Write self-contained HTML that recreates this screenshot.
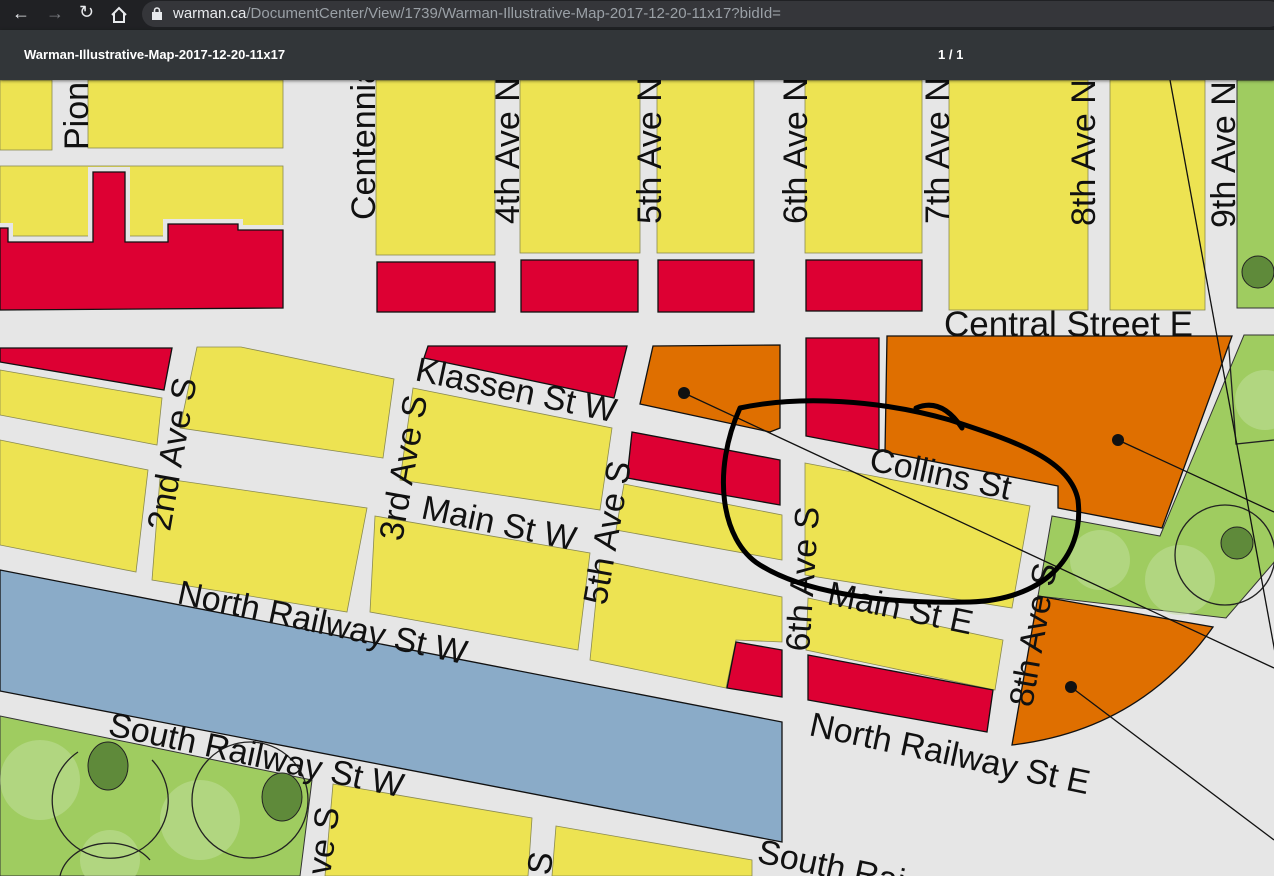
<!DOCTYPE html>
<html><head><meta charset="utf-8"><style>
html,body{margin:0;padding:0;width:1274px;height:876px;overflow:hidden;background:#e6e6e6;font-family:"Liberation Sans",sans-serif}
#top{position:absolute;left:0;top:0;width:1274px;height:30px;background:#202124}
#url{position:absolute;left:142px;top:1px;width:1140px;height:26px;border-radius:14px;background:#35363a}
#bar{position:absolute;left:0;top:30px;width:1274px;height:50px;background:#323639;box-shadow:0 1px 3px rgba(0,0,0,.5)}
svg{position:absolute;left:0;top:0}
</style></head><body>
<svg width="1274" height="876" viewBox="0 0 1274 876" font-family="Liberation Sans, sans-serif">
<rect x="0" y="80" width="1274" height="796" fill="#e6e6e6"/>
<g stroke="#8a8a50" stroke-width="0.8" fill="#ede352">
<rect x="0" y="80" width="52" height="70"/>
<rect x="88" y="80" width="195" height="68"/>
<rect x="0" y="166" width="283" height="70"/>
<rect x="376" y="80" width="119" height="175"/>
<rect x="520" y="80" width="120" height="173"/>
<rect x="657" y="80" width="97" height="173"/>
<rect x="805" y="80" width="117" height="173"/>
<rect x="949" y="80" width="139" height="230"/>
<rect x="1110" y="80" width="95" height="230"/>
<polygon points="0,370 162,398 157,445 0,415"/>
<polygon points="197,347 241,347 394,379 383,458 180,428"/>
<polygon points="413,388 612,428 600,510 400,480"/>
<polygon points="0,440 148,470 136,572 0,545"/>
<polygon points="160,478 367,508 347,612 152,580"/>
<polygon points="375,516 590,553 578,650 370,612"/>
<polygon points="624,484 782,515 782,560 616,530"/>
<polygon points="805,463 1030,506 1012,608 805,575"/>
<polygon points="600,560 782,597 782,642 736,640 726,688 590,660"/>
<polygon points="808,598 1003,640 995,690 806,650"/>
<polygon points="333,784 532,818 528,876 325,876"/>
<polygon points="556,826 752,860 752,876 552,876"/>
</g>
<g fill="#9fcc60" stroke="#333" stroke-width="1">
<rect x="1237" y="80" width="40" height="228"/>
<polygon points="1244,335 1276,335 1276,560 1226,618 1038,596 1052,516 1160,536"/>
<polygon points="0,716 312,780 300,876 0,876"/>
</g>
<g fill="#c4e0a0" opacity=".5">
<circle cx="1100" cy="560" r="30"/><circle cx="1180" cy="580" r="35"/><circle cx="1265" cy="400" r="30"/>
<circle cx="40" cy="780" r="40"/><circle cx="200" cy="820" r="40"/><circle cx="110" cy="860" r="30"/>
</g>
<g fill="none" stroke="#222" stroke-width="1.3">
<path d="M1274,440 L1236,444 L1228,336"/>
<circle cx="1225" cy="555" r="50"/>
<path d="M78,752 A58,58 0 1 0 152,760"/>
<circle cx="250" cy="800" r="58"/>
<path d="M60,876 A50,40 0 0 1 150,860"/>
</g>
<g fill="#5f8a3a" stroke="#222" stroke-width="1">
<circle cx="1258" cy="272" r="16"/>
<circle cx="1237" cy="543" r="16"/>
<ellipse cx="108" cy="766" rx="20" ry="24"/>
<ellipse cx="282" cy="797" rx="20" ry="24"/>
</g>
<g fill="#dd0033" stroke="#e6e6e6" stroke-width="10" stroke-linejoin="miter">
<polygon points="0,228 8,228 8,242 93,242 93,172 125,172 125,242 168,242 168,224 238,224 238,230 283,230 283,308 0,310"/>
</g>
<g fill="#dd0033" stroke="#111" stroke-width="1.3">
<polygon points="0,228 8,228 8,242 93,242 93,172 125,172 125,242 168,242 168,224 238,224 238,230 283,230 283,308 0,310"/>
<rect x="377" y="262" width="118" height="50"/>
<rect x="521" y="260" width="117" height="52"/>
<rect x="658" y="260" width="96" height="52"/>
<rect x="806" y="260" width="116" height="51"/>
<polygon points="0,348 172,348 164,390 0,362"/>
<polygon points="428,346 627,346 614,398 424,358"/>
<polygon points="806,338 879,338 879,450 806,436"/>
<polygon points="632,432 780,460 780,505 627,478"/>
<polygon points="736,642 782,650 782,697 727,688"/>
<polygon points="808,655 993,690 987,732 808,700"/>
</g>
<g fill="#df6f00" stroke="#111" stroke-width="1.3">
<polygon points="653,346 780,345 780,428 770,432 640,404"/>
<polygon points="887,336 1232,336 1162,528 1058,508 1058,486 885,452"/>
<path d="M1038,596 L1213,627 Q1140,730 1012,745 Z"/>
</g>
<polygon points="0,570 782,722 782,842 0,691" fill="#8aabc8" stroke="#111" stroke-width="1.3"/>
<g stroke="#111" stroke-width="1.3" fill="none">
<line x1="1170" y1="80" x2="1316" y2="876"/>
<line x1="684" y1="393" x2="1274" y2="668"/>
<line x1="1118" y1="440" x2="1274" y2="512"/>
<line x1="1071" y1="687" x2="1274" y2="840"/>
</g>
<g fill="#111"><circle cx="684" cy="393" r="6"/><circle cx="1118" cy="440" r="6"/><circle cx="1071" cy="687" r="6"/></g>
<g fill="#111" font-size="34">
<text transform="translate(88,150) rotate(-90)">Pion</text>
<text transform="translate(375,220) rotate(-90)">Centennial</text>
<text transform="translate(519,224) rotate(-90)">4th Ave N</text>
<text transform="translate(661,224) rotate(-90)">5th Ave N</text>
<text transform="translate(807,224) rotate(-90)">6th Ave N</text>
<text transform="translate(949,224) rotate(-90)">7th Ave N</text>
<text transform="translate(1095,226) rotate(-90)">8th Ave N</text>
<text transform="translate(1235,228) rotate(-90)">9th Ave N</text>
<text x="944" y="336" font-size="35">Central Street E</text>
<text transform="translate(414,380) rotate(12)">Klassen St W</text>
<text transform="translate(170,532) rotate(-80)">2nd Ave S</text>
<text transform="translate(402,542) rotate(-80)">3rd Ave S</text>
<text transform="translate(606,606) rotate(-80)">5th Ave S</text>
<text transform="translate(809,652) rotate(-86)">6th Ave S</text>
<text transform="translate(1032,708) rotate(-80)">8th Ave S</text>
<text transform="translate(420,518) rotate(12)">Main St W</text>
<text transform="translate(868,470) rotate(12)">Collins St</text>
<text transform="translate(826,604) rotate(12)">Main St E</text>
<text transform="translate(176,603) rotate(12)">North Railway St W</text>
<text transform="translate(107,735) rotate(12)">South Railway St W</text>
<text transform="translate(808,735) rotate(12)">North Railway St E</text>
<text transform="translate(756,862) rotate(12)">South Rai</text>
<text transform="translate(330,876) rotate(-82)">ve S</text>
<text transform="translate(550,876) rotate(-82)">S</text>
</g>
<g fill="none" stroke="#000" stroke-width="5" stroke-linecap="round">
<path d="M740,408 C800,395 880,400 950,420 C1010,440 1070,458 1078,500 C1085,560 1040,600 970,602 C870,604 800,590 760,565 C720,540 712,470 740,408"/>
<path d="M916,408 C935,400 950,410 962,428"/>
</g>
</svg>
<div id="top"><div id="url"></div>
<span style="position:absolute;left:12px;top:3px;color:#e8eaed;font-size:18px">&#8592;</span>
<span style="position:absolute;left:46px;top:3px;color:#7a7c80;font-size:18px">&#8594;</span>
<span style="position:absolute;left:79px;top:2px;color:#e8eaed;font-size:18px">&#8635;</span>
<svg style="position:absolute;left:110px;top:6px" width="18" height="18" viewBox="0 0 18 18"><path d="M2,9 L9,2 L16,9 M4,7 V16 H14 V7" fill="none" stroke="#e8eaed" stroke-width="2"/></svg>
<svg style="position:absolute;left:152px;top:7px" width="10" height="13" viewBox="0 0 10 13"><rect x="0" y="5" width="10" height="8" fill="#e8eaed"/><path d="M2.5,6 V3.5 a2.5,2.5 0 0 1 5,0 V6" fill="none" stroke="#e8eaed" stroke-width="1.6"/></svg>
<span style="position:absolute;left:173px;top:5px;font-size:15px;color:#9aa0a6"><span style="color:#e8eaed">warman.ca</span>/DocumentCenter/View/1739/Warman-Illustrative-Map-2017-12-20-11x17?bidId=</span>
</div>
<div id="bar">
<span style="position:absolute;left:24px;top:17px;color:#fff;font-size:13px;font-weight:bold">Warman-Illustrative-Map-2017-12-20-11x17</span>
<span style="position:absolute;left:938px;top:17px;color:#fff;font-size:13px;font-weight:bold">1 / 1</span>
</div>
</body></html>
